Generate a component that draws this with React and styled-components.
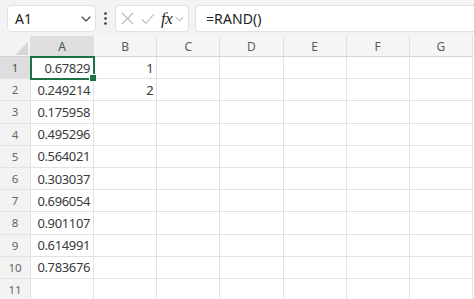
import React from "react";
import styled, { createGlobalStyle } from "styled-components";

const Global = createGlobalStyle`
  html, body { margin: 0; padding: 0; background: #ffffff; }
  body { font-family: "Noto Sans", "Noto Sans CJK JP", sans-serif; }
  * { box-sizing: border-box; }
`;

const Frame = styled.div`
  width: 474px;
  height: 299px;
  overflow: hidden;
  background: #ffffff;
  display: flex;
  flex-direction: column;
`;

const Toolbar = styled.div`
  height: 36px;
  flex: none;
  background: #f3f3f3;
  display: flex;
  align-items: flex-start;
  padding: 5px 0 0 7px;
`;

const Field = styled.div`
  height: 27px;
  background: #ffffff;
  border: 1px solid #e1e1e1;
  border-radius: 4px;
  display: flex;
  align-items: center;
  flex: ${(p) => (p.$grow ? "1 1 auto" : "none")};
  width: ${(p) => (p.$width ? `${p.$width}px` : "auto")};
  padding: ${(p) => p.$pad || "0"};
  margin-right: ${(p) => (p.$grow ? "-6px" : "0")};
`;

const FieldText = styled.span`
  font-size: 14px;
  color: #222222;
  flex: 1;
  letter-spacing: 0.1px;
`;

const Dots = styled.div`
  width: ${(p) => p.$w || 19}px;
  height: 27px;
  display: flex;
  align-items: center;
  justify-content: center;
`;

const Fx = styled.span`
  font-family: "Liberation Serif", "DejaVu Serif", serif;
  font-style: italic;
  font-size: 17px;
  color: #2a2a2a;
  letter-spacing: -0.5px;
  margin-left: 6px;
  line-height: 1;
`;

const Sheet = styled.div`
  display: grid;
  grid-template-columns: 31px repeat(7, 63.14px);
  grid-template-rows: 21px repeat(11, 22.2px);
`;

const Corner = styled.div`
  background: #f3f3f3;
  border-right: 1px solid #e0e0e0;
  border-bottom: 1px solid #d4d4d4;
  overflow: hidden;
`;

const ColHead = styled.div`
  background: ${(p) => (p.$active ? "#dedede" : "#f5f5f5")};
  border-right: 1px solid #e0e0e0;
  border-bottom: 1px solid ${(p) => (p.$active ? "#7da68d" : "#d4d4d4")};
  display: flex;
  align-items: center;
  justify-content: center;
  font-size: 12px;
  color: ${(p) => (p.$active ? "#3a5a47" : "#5c5c5c")};
  padding-top: 1px;
`;

const RowHead = styled.div`
  background: ${(p) => (p.$active ? "#dedede" : "#f3f3f3")};
  border-right: 1px solid ${(p) => (p.$active ? "#7da68d" : "#e0e0e0")};
  border-bottom: 1px solid #e2e2e2;
  display: flex;
  align-items: center;
  justify-content: center;
  font-size: 11.5px;
  color: ${(p) => (p.$active ? "#3d5c49" : "#666666")};
`;

const Cell = styled.div`
  position: relative;
  border-right: 1px solid #e2e2e2;
  border-bottom: 1px solid #e2e2e2;
  display: flex;
  align-items: center;
  justify-content: flex-end;
  padding-right: 3px;
  font-size: 13px;
  letter-spacing: -0.35px;
  color: #3a3a3a;
  white-space: nowrap;

  ${(p) =>
    p.$selected &&
    `
    &::after {
      content: "";
      position: absolute;
      top: -1px;
      left: -1px;
      right: -2px;
      bottom: -2px;
      border: 2px solid #1e7145;
      pointer-events: none;
    }
    &::before {
      content: "";
      position: absolute;
      right: -4px;
      bottom: -4px;
      width: 6px;
      height: 6px;
      background: #1e7145;
      border: 1px solid #ffffff;
      z-index: 2;
    }
  `}
`;

const Chevron = ({ color = "#555", w = 10 }) => (
  <svg width={w} height="6" viewBox="0 0 10 6" fill="none">
    <path d="M1 1l4 4 4-4" stroke={color} strokeWidth="1.1" strokeLinecap="round" strokeLinejoin="round" />
  </svg>
);

const CornerTriangle = () => (
  <svg width="31" height="21" viewBox="0 0 31 21" style={{ display: "block" }}>
    <path d="M28 6 L28 19 L15 19 Z" fill="#d6d6d6" />
  </svg>
);

const values = [
  "0.67829",
  "0.249214",
  "0.175958",
  "0.495296",
  "0.564021",
  "0.303037",
  "0.696054",
  "0.901107",
  "0.614991",
  "0.783676",
  "",
];
const bValues = ["1", "2"];
const cols = ["A", "B", "C", "D", "E", "F", "G"];

export default function App() {
  return (
    <>
      <Global />
      <Frame>
        <Toolbar>
          <Field $width={89} $pad="0 4px 0 7px">
            <FieldText>A1</FieldText>
            <Chevron color="#444" />
          </Field>
          <Dots>
            <svg width="3" height="13" viewBox="0 0 3 13">
              <circle cx="1.5" cy="1.5" r="1.3" fill="#333" />
              <circle cx="1.5" cy="6.5" r="1.3" fill="#333" />
              <circle cx="1.5" cy="11.5" r="1.3" fill="#333" />
            </svg>
          </Dots>
          <Field $width={74} $pad="0 0 0 5px">
            <svg width="13" height="13" viewBox="0 0 13 13" fill="none">
              <path d="M1 1l11 11M12 1L1 12" stroke="#b9b9b9" strokeWidth="1.1" />
            </svg>
            <svg width="14" height="12" viewBox="0 0 14 12" fill="none" style={{ marginLeft: 7 }}>
              <path d="M1 6.5l4 4L13 1" stroke="#b9b9b9" strokeWidth="1.1" />
            </svg>
            <Fx>fx</Fx>
            <span style={{ marginLeft: 3, display: "flex" }}>
              <Chevron color="#999" w={9} />
            </span>
          </Field>
          <Dots $w={6} />
          <Field $grow $pad="0 0 0 10px">
            <FieldText>=RAND()</FieldText>
          </Field>
        </Toolbar>
        <Sheet>
          <Corner>
            <CornerTriangle />
          </Corner>
          {cols.map((c, i) => (
            <ColHead key={c} $active={i === 0}>
              {c}
            </ColHead>
          ))}
          {values.map((v, r) => (
            <React.Fragment key={r}>
              <RowHead $active={r === 0}>{r + 1}</RowHead>
              <Cell $selected={r === 0}>{v}</Cell>
              <Cell>{bValues[r] || ""}</Cell>
              {cols.slice(2).map((c) => (
                <Cell key={c} />
              ))}
            </React.Fragment>
          ))}
        </Sheet>
      </Frame>
    </>
  );
}
